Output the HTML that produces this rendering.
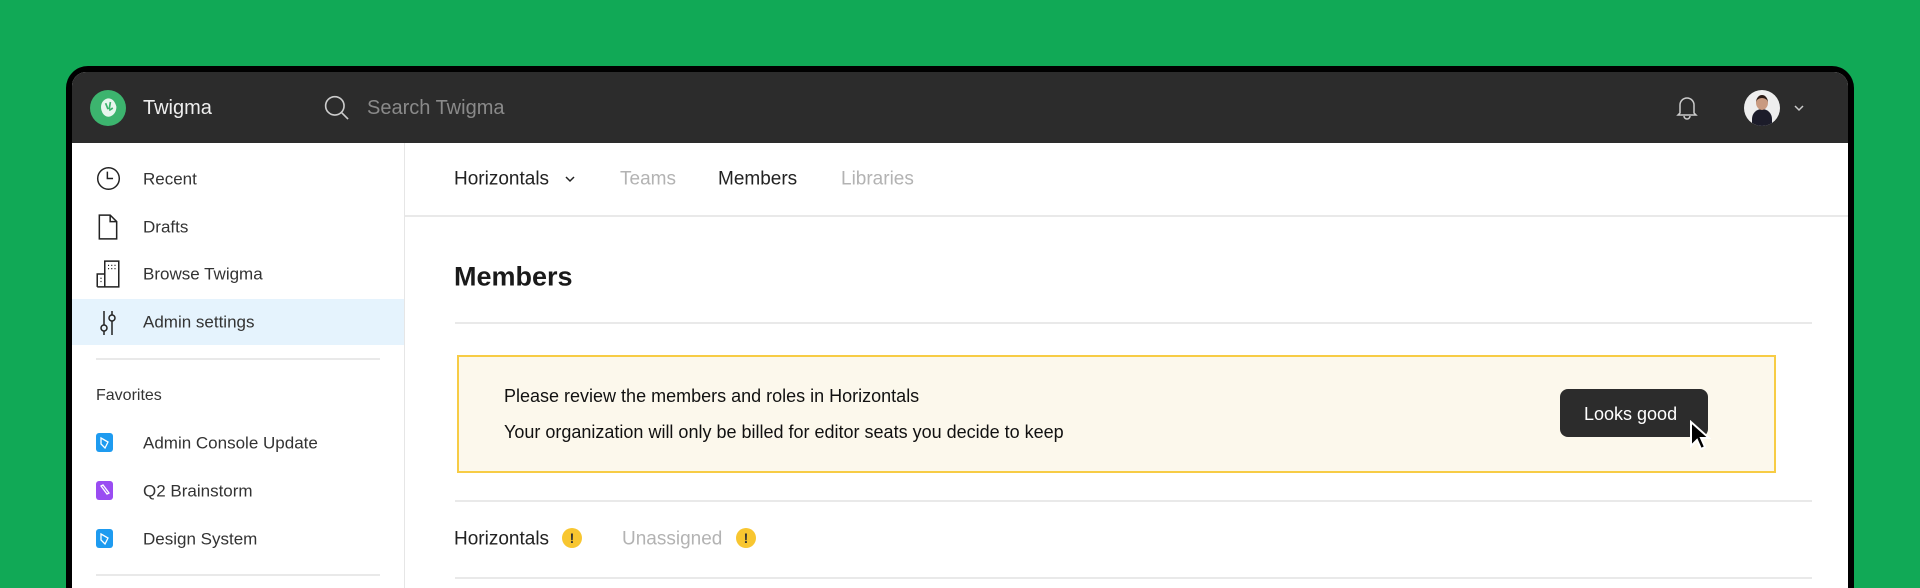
<!DOCTYPE html><html><head><style>
*{margin:0;padding:0;box-sizing:border-box}
html,body{width:1920px;height:588px;overflow:hidden}
body{background:#11a956;font-family:"Liberation Sans",sans-serif;position:relative}
.a{position:absolute}
.t{position:absolute;white-space:nowrap;line-height:1;transform:translateY(-50%)}
.hr{position:absolute;height:2px;background:#e9e9e9}
.st{font-size:17px;color:#333}
.tab{font-size:19px}
.badge{position:absolute;width:20px;height:20px;border-radius:50%;background:#f8c630;color:#333;font-size:14px;font-weight:bold;text-align:center;line-height:20px;transform:translate(-50%,-50%)}
.fav{position:absolute;width:17px;height:19px;border-radius:3px}
</style></head><body>
<div class="a" style="left:66px;top:66px;width:1788px;height:522px;background:#000;border-radius:22px 22px 0 0"></div>
<div class="a" style="left:72px;top:72px;width:1776px;height:516px;background:#fff;border-radius:14px 14px 0 0;overflow:hidden">
 <div class="a" style="left:0;top:0;width:100%;height:71px;background:#2c2c2c"></div>
</div>
<div class="a" style="left:90px;top:90px;width:36px;height:36px;border-radius:50%;background:#3cb46e"></div>
<svg class="a" style="left:96px;top:96px" width="24" height="24" viewBox="0 0 20 20"><path d="M10 2C5 3 3 8 5 13c1 3 4 5 7 4 3-1 5-4 5-8-1-4-3-7-7-7z" fill="#e8f6ee"/><path d="M8 6l2 5M12 5l-1 6M14 10l-3 2" stroke="#3cb46e" stroke-width="1.4" fill="none"/></svg>
<div class="t" style="left:143px;top:108px;font-size:20px;color:#eee">Twigma</div>
<svg class="a" style="left:324px;top:95px" width="26" height="26" viewBox="0 0 24 24" fill="none" stroke="#ccc" stroke-width="1.5"><circle cx="10" cy="10" r="8.5"/><path d="M16.2 16.2l6 6"/></svg>
<div class="t" style="left:367px;top:108px;font-size:20px;color:#8a8a8a">Search Twigma</div>
<svg class="a" style="left:1675px;top:95px" width="24" height="26" viewBox="0 0 24 26" fill="none" stroke="#ccc" stroke-width="1.5"><path d="M5 18V10a7 7 0 0 1 14 0v8l2 2H3z"/><path d="M9 21a3 3 0 0 0 6 0"/></svg>
<div class="a" style="left:1744px;top:90px;width:36px;height:36px;border-radius:50%;background:#eee;overflow:hidden"><div class="a" style="left:8px;top:19px;width:20px;height:22px;border-radius:10px 10px 0 0;background:#1c1c2a"></div><div class="a" style="left:12px;top:5px;width:12px;height:15px;border-radius:50%;background:#c99a80;border-top:3px solid #2a1a14"></div></div>
<svg class="a" style="left:1793px;top:103px" width="12" height="10" viewBox="0 0 12 10" fill="none" stroke="#ccc" stroke-width="1.5"><path d="M2 3l4 4 4-4"/></svg>
<div class="a" style="left:404px;top:143px;width:1px;height:445px;background:#e6e6e6"></div>
<div class="a" style="left:72px;top:299px;width:332px;height:46px;background:#e5f3fd"></div>
<svg class="a" style="left:96px;top:166px" width="25" height="25" viewBox="0 0 22 22" fill="none" stroke="#222" stroke-width="1.3"><circle cx="11" cy="11" r="9.5"/><path d="M10 5v6h5"/></svg>
<div class="t st" style="left:143px;top:179px">Recent</div>
<svg class="a" style="left:98px;top:214px" width="20" height="26" viewBox="0 0 18 24" fill="none" stroke="#222" stroke-width="1.4"><path d="M1 1h10l6 6v16H1z M11 1v6h6"/></svg>
<div class="t st" style="left:143px;top:227px">Drafts</div>
<svg class="a" style="left:96px;top:260px" width="24" height="28" viewBox="0 0 22 26" fill="none" stroke="#222" stroke-width="1.4"><path d="M8 25V1h13v24zM1 25V13h7M1 25h20"/><path d="M11 5h1M14 5h1M17 5h1M11 8h1M14 8h1M17 8h1M4 17h1M4 20h1" stroke-width="1.2"/></svg>
<div class="t st" style="left:143px;top:274px">Browse Twigma</div>
<svg class="a" style="left:97px;top:309px" width="22" height="28" viewBox="0 0 22 26" fill="none" stroke="#222" stroke-width="1.5"><path d="M7 1v14M7 21v4M15 1v4M15 11v14"/><circle cx="7" cy="18" r="3"/><circle cx="15" cy="8" r="3"/></svg>
<div class="t st" style="left:143px;top:322px">Admin settings</div>
<div class="hr" style="left:96px;top:358px;width:284px"></div>
<div class="t" style="left:96px;top:396px;font-size:16px;color:#333">Favorites</div>
<div class="fav" style="left:96px;top:433px;background:#1e9bf0"></div>
<svg class="a" style="left:99px;top:436px" width="11" height="13" viewBox="0 0 11 13" fill="none" stroke="#fff" stroke-width="1.3"><path d="M2 2l7 4-3 6-4-4z"/></svg>
<div class="t st" style="left:143px;top:443px">Admin Console Update</div>
<div class="fav" style="left:96px;top:481px;background:#9a4cf2"></div>
<svg class="a" style="left:99px;top:484px" width="11" height="13" viewBox="0 0 11 13" fill="none" stroke="#fff" stroke-width="1.3"><path d="M2 2l6 8 2-1-6-8z"/></svg>
<div class="t st" style="left:143px;top:491px">Q2 Brainstorm</div>
<div class="fav" style="left:96px;top:529px;background:#1e9bf0"></div>
<svg class="a" style="left:99px;top:532px" width="11" height="13" viewBox="0 0 11 13" fill="none" stroke="#fff" stroke-width="1.3"><path d="M2 2l7 4-3 6-4-4z"/></svg>
<div class="t st" style="left:143px;top:539px">Design System</div>
<div class="hr" style="left:96px;top:574px;width:284px"></div>
<div class="t tab" style="left:454px;top:179px;color:#222">Horizontals</div>
<svg class="a" style="left:564px;top:174px" width="12" height="10" viewBox="0 0 12 10" fill="none" stroke="#222" stroke-width="1.5"><path d="M2 3l4 4 4-4"/></svg>
<div class="t tab" style="left:620px;top:179px;color:#b3b3b3">Teams</div>
<div class="t tab" style="left:718px;top:179px;color:#222">Members</div>
<div class="t tab" style="left:841px;top:179px;color:#b3b3b3">Libraries</div>
<div class="hr" style="left:405px;top:215px;width:1443px"></div>
<div class="t" style="left:454px;top:277px;font-size:27px;font-weight:bold;color:#1a1a1a">Members</div>
<div class="hr" style="left:455px;top:322px;width:1357px"></div>
<div class="a" style="left:457px;top:355px;width:1319px;height:118px;background:#fcf8ec;border:2px solid #f7cc45"></div>
<div class="t" style="left:504px;top:396px;font-size:18px;color:#111">Please review the members and roles in Horizontals</div>
<div class="t" style="left:504px;top:432px;font-size:18px;color:#111">Your organization will only be billed for editor seats you decide to keep</div>
<div class="a" style="left:1560px;top:389px;width:148px;height:48px;border-radius:8px;background:#2c2c2c"></div>
<div class="t" style="left:1584px;top:414px;font-size:18px;color:#fff">Looks good</div>
<svg class="a" style="left:1689px;top:420px" width="22" height="32" viewBox="0 0 22 32"><path d="M2 2v24l6-6 4 9 4-2-4-9h8z" fill="#000" stroke="#fff" stroke-width="2"/></svg>
<div class="hr" style="left:455px;top:500px;width:1357px"></div>
<div class="t tab" style="left:454px;top:539px;color:#222">Horizontals</div>
<div class="badge" style="left:572px;top:538px">!</div>
<div class="t tab" style="left:622px;top:539px;color:#b3b3b3">Unassigned</div>
<div class="badge" style="left:746px;top:538px">!</div>
<div class="hr" style="left:455px;top:577px;width:1357px"></div>
</body></html>
